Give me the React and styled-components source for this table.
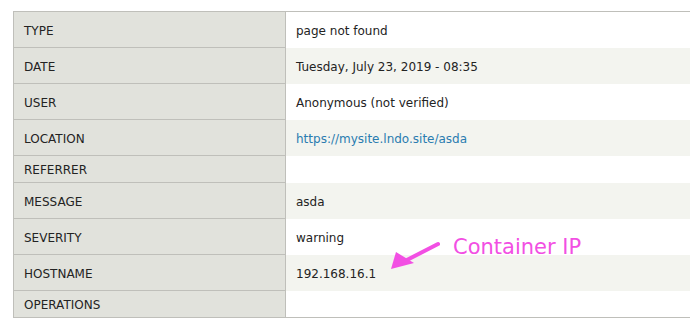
import React from "react";
import styled, { createGlobalStyle } from "styled-components";

const GlobalStyle = createGlobalStyle`
    body {
        margin: 0;
        background: #fff;
        font-family: "DejaVu Sans", Verdana, sans-serif;
    }
`;

const Page = styled.div`
    position: relative;
    width: 690px;
    height: 327px;
    overflow: hidden;
    padding: 11px 0 0 13px;
    box-sizing: border-box;
`;

const Details = styled.div`
    display: grid;
    grid-template-columns: 273px 1fr;
    width: 700px;
    border-top: 1px solid #bfbfba;
    border-bottom: 1px solid #bfbfba;
    font-size: 12px;
    line-height: 20px;
    color: #232323;
`;

const Label = styled.div`
    box-sizing: border-box;
    padding: 4px 10px 2px;
    background: #e1e2dc;
    border-left: 1px solid #bfbfba;
    border-right: 1px solid #bfbfba;
    border-bottom: ${(p) => (p.$last ? "none" : "1px solid #bfbfba")};
    display: flex;
    align-items: center;
    text-transform: uppercase;
`;

const Value = styled.div`
    padding: 9px 10px 7px;
    background: ${(p) => (p.$even ? "#f3f4ef" : "#fff")};
    display: flex;
    align-items: center;
`;

const Link = styled.a`
    color: #2a7cb0;
    text-decoration: none;
`;

const Note = styled.div`
    position: absolute;
    left: 453px;
    top: 234px;
    font-size: 21px;
    line-height: 26px;
    color: #f24fe3;
`;

const Arrow = styled.svg`
    position: absolute;
    left: 385px;
    top: 236px;
`;

const rows = [
    ["Type", "page not found"],
    ["Date", "Tuesday, July 23, 2019 - 08:35"],
    ["User", "Anonymous (not verified)"],
    ["Location", <Link href="#">https://mysite.lndo.site/asda</Link>],
    ["Referrer", ""],
    ["Message", "asda"],
    ["Severity", "warning"],
    ["Hostname", "192.168.16.1"],
    ["Operations", ""],
];

const App = () => {
    return (
        <Page>
            <GlobalStyle />
            <Details>
                {rows.map(([label, value], i) => (
                    <React.Fragment key={label}>
                        <Label $last={i === rows.length - 1}>{label}</Label>
                        <Value $even={i % 2 === 1}>{value}</Value>
                    </React.Fragment>
                ))}
            </Details>
            <Note>Container IP</Note>
            <Arrow width="60" height="40" viewBox="0 0 60 40">
                <line x1="53" y1="8" x2="18" y2="26" stroke="#f24fe3" strokeWidth="4" strokeLinecap="round" />
                <polygon points="6,33 11,16 29,27" fill="#f24fe3" />
            </Arrow>
        </Page>
    );
};

export default App;
